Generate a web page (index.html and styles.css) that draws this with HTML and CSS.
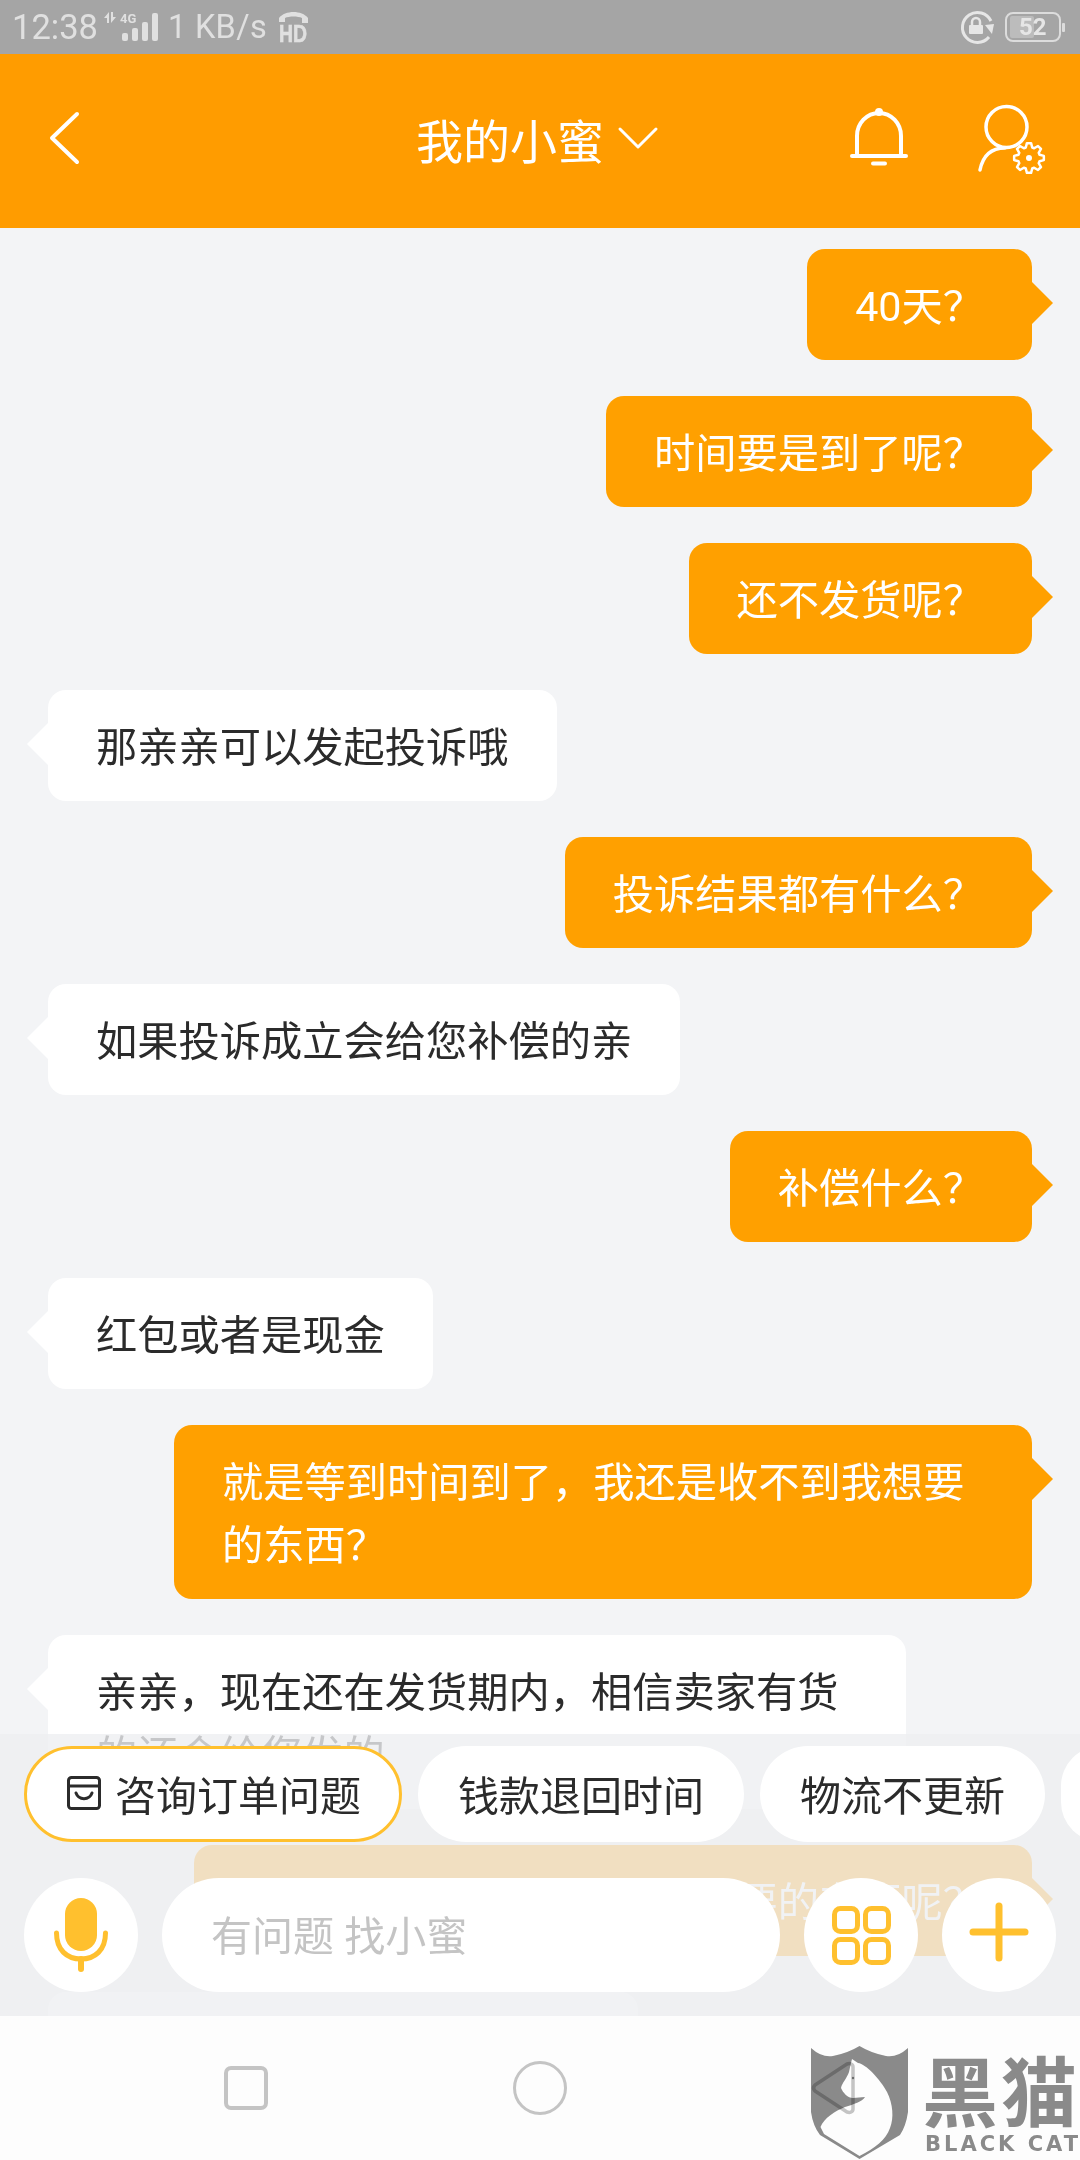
FILE: index.html
```html
<!DOCTYPE html>
<html lang="zh-CN">
<head>
<meta charset="UTF-8">
<meta name="viewport" content="width=device-width, initial-scale=1.0">
<title>我的小蜜</title>
<link rel="stylesheet" href="styles.css">
</head>
<body>
<div class="status-bar">
    <span class="time">12:38</span>
    <svg width="58" height="34" viewBox="0 0 58 34">
        <path d="M8 2 V13 H6 V8 H3 Z M10 2 H12 V7 H15 L10 13 Z" fill="#e0e0e0"/>
        <text x="19" y="13" class="signal-text">4G</text>
        <rect x="21" y="23" width="6" height="8" rx="2" fill="#e0e0e0"/>
        <rect x="31" y="18" width="6" height="13" rx="2" fill="#e0e0e0"/>
        <rect x="41" y="12" width="6" height="19" rx="2" fill="#e0e0e0"/>
        <rect x="51" y="3" width="6" height="28" rx="2" fill="#e0e0e0"/>
    </svg>
    <span class="speed">1 KB/s</span>
    <svg class="hd" width="32" height="34" viewBox="0 0 32 34">
        <path d="M1 12 V8 C7 0 24 0 30 8 V13 H24 V8 C20 6 11 6 7 8 V12 Z" fill="#e0e0e0"/>
        <text x="1" y="32" class="hd-text" textLength="28" lengthAdjust="spacingAndGlyphs">HD</text>
    </svg>
    <div class="status-right">
        <svg width="34" height="34" viewBox="0 0 34 34">
            <path d="M29 27 A15 15 0 1 1 31 11" fill="none" stroke="#e6e6e6" stroke-width="3"/>
            <path d="M25 15 L34 14 L32 24 Z" fill="#e6e6e6"/>
            <rect x="9" y="15" width="14" height="9" rx="1" fill="#e6e6e6"/>
            <path d="M12 15 V12 A4 4 0 0 1 20 12 V15" fill="none" stroke="#e6e6e6" stroke-width="2.5"/>
        </svg>
        <div class="battery">
            <div class="battery-level"></div>
            <span class="battery-text">52</span>
        </div>
        <div class="battery-nub"></div>
    </div>
</div>

<div class="top-bar">
    <svg width="32" height="54" viewBox="0 0 32 54">
        <path d="M28 3 L3 27 L28 51" fill="none" stroke="#fff" stroke-width="4" stroke-linecap="round" stroke-linejoin="round"/>
    </svg>
    <div class="title">
        <span>我的小蜜</span>
        <svg width="40" height="22" viewBox="0 0 40 22">
            <path d="M2 2 L20 20 L38 2" fill="none" stroke="#fff" stroke-width="3" stroke-linecap="round" stroke-linejoin="round"/>
        </svg>
    </div>
    <div class="top-actions">
        <svg width="58" height="60" viewBox="0 0 58 60">
            <circle cx="29" cy="4" r="4" fill="#fff"/>
            <path d="M7 48 V28 A22 23 0 0 1 51 28 V48" fill="none" stroke="#fff" stroke-width="4"/>
            <path d="M2 48 H56" stroke="#fff" stroke-width="4" stroke-linecap="round"/>
            <path d="M23 55.5 H35" stroke="#fff" stroke-width="4" stroke-linecap="round"/>
        </svg>
        <svg width="78" height="76" viewBox="975 100 78 76">
            <circle cx="1007.5" cy="127" r="20.5" fill="none" stroke="#fff" stroke-width="3.5"/>
            <path d="M981 170 C984 155 993 148 1006 148" fill="none" stroke="#fff" stroke-width="3.5" stroke-linecap="round"/>
            <g transform="translate(1030 158)">
                <path d="M10.52 -3.22 L14.85 -2.09 L14.85 2.09 L10.52 3.22 L9.72 5.16 L11.98 9.02 L9.02 11.98 L5.16 9.72 L3.22 10.52 L2.09 14.85 L-2.09 14.85 L-3.22 10.52 L-5.16 9.72 L-9.02 11.98 L-11.98 9.02 L-9.72 5.16 L-10.52 3.22 L-14.85 2.09 L-14.85 -2.09 L-10.52 -3.22 L-9.72 -5.16 L-11.98 -9.02 L-9.02 -11.98 L-5.16 -9.72 L-3.22 -10.52 L-2.09 -14.85 L2.09 -14.85 L3.22 -10.52 L5.16 -9.72 L9.02 -11.98 L11.98 -9.02 L9.72 -5.16 Z" fill="none" stroke="#fff" stroke-width="2.5" stroke-linejoin="round"/>
                <circle r="3" fill="#fff"/>
            </g>
        </svg>
    </div>
</div>

<div class="chat">
    <div class="msg mine"><div class="bubble">40天？</div></div>
    <div class="msg mine"><div class="bubble">时间要是到了呢？</div></div>
    <div class="msg mine"><div class="bubble">还不发货呢？</div></div>
    <div class="msg theirs"><div class="bubble">那亲亲可以发起投诉哦</div></div>
    <div class="msg mine"><div class="bubble">投诉结果都有什么？</div></div>
    <div class="msg theirs"><div class="bubble">如果投诉成立会给您补偿的亲</div></div>
    <div class="msg mine"><div class="bubble">补偿什么？</div></div>
    <div class="msg theirs"><div class="bubble">红包或者是现金</div></div>
    <div class="msg mine"><div class="bubble">就是等到时间到了，我还是收不到我想要的东西？</div></div>
    <div class="msg theirs"><div class="bubble">亲亲，现在还在发货期内，相信卖家有货的还会给您发的</div></div>
    <div class="msg mine"><div class="bubble">如果到时间了还收不到我想要的东西呢？</div></div>
    <div class="msg theirs"><div class="bubble bubble-cut"></div></div>

    <div class="panel">
        <div class="chips">
            <div class="chip chip-active">
                <svg width="34" height="34" viewBox="0 0 34 34">
                    <rect x="1.5" y="1.5" width="31" height="31" rx="3" fill="none" stroke="#2b2b2b" stroke-width="3"/>
                    <path d="M2 10 H32" stroke="#2b2b2b" stroke-width="3"/>
                    <path d="M9 17 A8.5 8.5 0 0 0 25 17" fill="none" stroke="#2b2b2b" stroke-width="3" stroke-linecap="round"/>
                </svg>
                <span>咨询订单问题</span>
            </div>
            <div class="chip">钱款退回时间</div>
            <div class="chip">物流不更新</div>
            <div class="chip"></div>
        </div>
        <div class="input-row">
            <div class="round-btn">
                <svg width="54" height="74" viewBox="0 0 54 74">
                    <rect x="11" y="0" width="32" height="53" rx="16" fill="#ffc02e"/>
                    <path d="M2.5 35 C2.5 52 13 61 27 61 C41 61 51.5 52 51.5 35" fill="none" stroke="#ffc02e" stroke-width="5" stroke-linecap="round"/>
                    <path d="M27 61 V71" stroke="#ffc02e" stroke-width="6" stroke-linecap="round"/>
                </svg>
            </div>
            <div class="input">有问题 找小蜜</div>
            <div class="round-btn">
                <svg width="58" height="58" viewBox="0 0 58 58">
                    <rect x="2.5" y="2.5" width="23" height="23" rx="6" fill="none" stroke="#ffc02e" stroke-width="5"/>
                    <rect x="33.5" y="2.5" width="23" height="23" rx="6" fill="none" stroke="#ffc02e" stroke-width="5"/>
                    <rect x="2.5" y="33.5" width="23" height="23" rx="6" fill="none" stroke="#ffc02e" stroke-width="5"/>
                    <rect x="33.5" y="33.5" width="23" height="23" rx="6" fill="none" stroke="#ffc02e" stroke-width="5"/>
                </svg>
            </div>
            <div class="round-btn">
                <svg class="plus" width="58" height="58" viewBox="0 0 58 58">
                    <path d="M3 29 H55 M29 3 V55" stroke="#ffc02e" stroke-width="7" stroke-linecap="round"/>
                </svg>
            </div>
        </div>
    </div>
</div>

<div class="nav-bar">
    <div class="nav-square"></div>
    <div class="nav-circle"></div>
    <svg width="44" height="52" viewBox="0 0 44 52">
        <path d="M35 2 L3 23 C1 25 1 27 3 29 L35 50 C38 51 41 50 41 47 V5 C41 2 38 1 35 2 Z" fill="none" stroke="#c4c4c4" stroke-width="3.5" stroke-linejoin="round"/>
    </svg>
</div>

<div class="watermark">
    <svg width="98" height="115" viewBox="811 2045 98 115">
        <path d="M811 2048 Q822 2058 833 2056 Q848 2053 859.5 2046 Q871 2053 886 2056 Q897 2058 908 2048 V2112 Q906 2126 900 2135 L859.5 2159 L820 2135 Q813 2126 811 2112 Z" fill="#8b8b8b"/>
        <path d="M852 2059 L858 2063 C866 2064 880 2079 887 2092 C893 2104 894 2118 890 2128 C886 2140 875 2148 859.5 2156 L824 2134 L820.5 2127 C824 2118 835 2111 845 2107 C854 2104 862 2102 865 2097 L853 2098 C848 2098 843 2093 841 2088 C842 2083 847 2078 849 2072 C850 2067 851 2063 852 2059 Z" fill="#fff"/>
        <circle cx="853" cy="2078" r="1.2" fill="#8b8b8b"/>
    </svg>
    <div class="watermark-text">
        <span class="watermark-cn">黑猫</span>
        <span class="watermark-en">BLACK CAT</span>
    </div>
</div>
</body>
</html>
```

FILE: styles.css
```css
* {
    box-sizing: border-box;
}
body {
    margin: 0;
    width: 1080px;
    height: 2160px;
    display: flex;
    flex-direction: column;
    overflow: hidden;
    position: relative;
    background-color: #f3f4f6;
    font-family: Roboto, "Noto Sans CJK SC", sans-serif;
}
svg {
    display: block;
    flex-shrink: 0;
    overflow: visible;
}

/* status bar */
.status-bar {
    height: 54px;
    padding: 0 15px 0 12px;
    display: flex;
    align-items: center;
    background-color: #a5a5a5;
    color: #e0e0e0;
}
.time {
    width: 89px;
    font-size: 34.5px;
    line-height: 54px;
}
.signal-text {
    font-size: 13px;
    font-weight: bold;
    fill: #e0e0e0;
    font-family: Roboto, sans-serif;
}
.speed {
    font-size: 32.5px;
    margin-left: 9px;
    letter-spacing: 0.3px;
}
.hd {
    margin-left: 11px;
}
.hd-text {
    font-size: 24px;
    font-weight: bold;
    fill: #e0e0e0;
    stroke: #e0e0e0;
    stroke-width: 0.6px;
    font-family: "Liberation Sans", sans-serif;
}
.status-right {
    margin-left: auto;
    display: flex;
    align-items: center;
}
.battery {
    position: relative;
    width: 56px;
    height: 30px;
    margin-left: 11px;
    padding: 2px 3px;
    border: 2.5px solid #dcdcdc;
    border-radius: 8px;
}
.battery-level {
    width: 24px;
    height: 100%;
    background-color: #bcbcbc;
    border-radius: 2px;
}
.battery-text {
    position: absolute;
    left: 12px;
    top: 1px;
    font-size: 24px;
    line-height: 25px;
    font-weight: bold;
    color: #e6e6e6;
}
.battery-nub {
    width: 3px;
    height: 9px;
    margin-left: 1px;
    background-color: #dcdcdc;
    border-radius: 1px;
}

/* header */
.top-bar {
    height: 174px;
    padding: 0 28px 6px 49px;
    display: flex;
    align-items: center;
    background-color: #ff9c00;
    color: #fff;
}
.title {
    margin-left: 335px;
    display: flex;
    align-items: center;
    gap: 14px;
    font-size: 47px;
}
.top-actions {
    margin-left: auto;
    display: flex;
    align-items: center;
    gap: 66px;
}

/* messages */
.chat {
    flex: 1;
    min-height: 0;
    padding-top: 21px;
    display: flex;
    flex-direction: column;
    gap: 36px;
    overflow: hidden;
    position: relative;
}
.msg {
    display: flex;
    flex-shrink: 0;
    padding: 0 48px;
}
.mine {
    justify-content: flex-end;
}
.bubble {
    position: relative;
    max-width: 858px;
    padding: 27px 48px 21px;
    border-radius: 18px;
    font-size: 41.25px;
    line-height: 63px;
}
.mine .bubble {
    background-color: #ffa000;
    color: #fff;
}
.theirs .bubble {
    background-color: #fff;
    color: #2b2b2b;
}
.bubble::after {
    content: "";
    position: absolute;
    top: 33px;
    border-top: 21px solid transparent;
    border-bottom: 21px solid transparent;
}
.mine .bubble::after {
    left: 100%;
    border-left: 21px solid #ffa000;
}
.theirs .bubble::after {
    right: 100%;
    border-right: 21px solid #fff;
}
.bubble-cut {
    width: 590px;
    height: 111px;
}

/* quick replies and input, over the chat */
.panel {
    position: absolute;
    left: 0;
    right: 0;
    bottom: 0;
    height: 282px;
    padding: 12px 24px 24px;
    display: flex;
    flex-direction: column;
    gap: 36px;
    background-color: rgba(238, 239, 241, 0.8);
}
.chips {
    display: flex;
    gap: 16px;
    margin-right: -24px;
    overflow: hidden;
}
.chip {
    height: 96px;
    padding: 0 40px 2px;
    flex-shrink: 0;
    display: flex;
    align-items: center;
    gap: 14px;
    border-radius: 48px;
    background-color: #fff;
    color: #2b2b2b;
    font-size: 41px;
}
.chip-active {
    padding: 0 38px 2px 40px;
    border: 3px solid #ffc02e;
}
.input-row {
    display: flex;
    gap: 24px;
}
.round-btn {
    width: 114px;
    height: 114px;
    flex-shrink: 0;
    display: flex;
    align-items: center;
    justify-content: center;
    border-radius: 50%;
    background-color: #fff;
}
.plus {
    margin-bottom: 6px;
}
.input {
    width: 618px;
    height: 114px;
    padding: 0 0 5px 49px;
    display: flex;
    align-items: center;
    border-radius: 57px;
    background-color: #fff;
    color: #c4c4c4;
    font-size: 41px;
}

/* navigation */
.nav-bar {
    height: 144px;
    flex-shrink: 0;
    display: flex;
    align-items: center;
    justify-content: center;
    gap: 245px;
    background-color: #fdfdfd;
}
.nav-square {
    width: 44px;
    height: 44px;
    border: 4px solid #c4c4c4;
    border-radius: 7px;
}
.nav-circle {
    width: 54px;
    height: 54px;
    border: 3.5px solid #c4c4c4;
    border-radius: 50%;
}

/* watermark */
.watermark {
    position: absolute;
    left: 811px;
    top: 2045px;
    width: 269px;
    height: 115px;
    display: flex;
    gap: 16px;
    mix-blend-mode: multiply;
}
.watermark-text {
    display: flex;
    flex-direction: column;
    color: #8b8b8b;
    font-weight: bold;
}
.watermark-cn {
    margin: 3px 0 0 -3px;
    font-family: "Noto Sans CJK SC", sans-serif;
    font-size: 76px;
    line-height: 80px;
    letter-spacing: 3px;
    white-space: nowrap;
}
.watermark-en {
    font-family: "DejaVu Sans", sans-serif;
    font-size: 21px;
    line-height: 32px;
    letter-spacing: 3px;
    white-space: nowrap;
}
```
